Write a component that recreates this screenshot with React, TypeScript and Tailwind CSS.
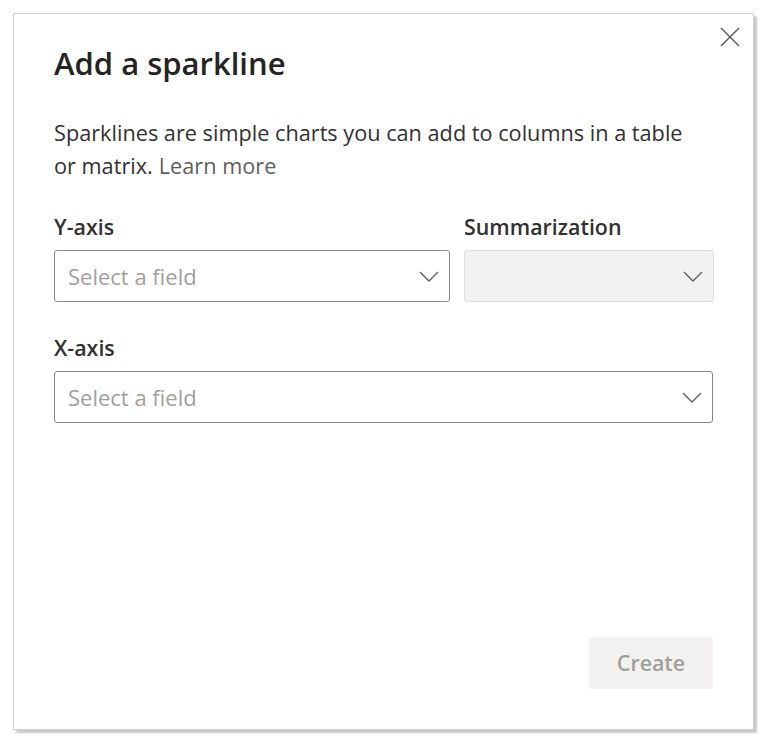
const font = { fontFamily: '"Open Sans", "Noto Sans", sans-serif' };

const Chevron = () => (
  <svg width="20" height="11" viewBox="0 0 20 11" fill="none" className="text-[#605e5c]">
    <polyline points="1,1 10,10 19,1" stroke="currentColor" strokeWidth="1.4" />
  </svg>
);

const SelectBox = ({ placeholder, disabled }: { placeholder?: string; disabled?: boolean }) => (
  <div
    className={`flex h-[52px] items-center justify-between rounded-[3px] border pl-[13px] pr-[10px] ${
      disabled ? "border-[#e1dfdd] bg-[#f3f2f1]" : "border-[#8a8886] bg-white"
    }`}
  >
    <span className="text-[22px] text-[#a19f9d]">{placeholder}</span>
    <Chevron />
  </div>
);

export default function App() {
  return (
    <div className="h-[750px] w-[768px] bg-white" style={font}>
      <div className="relative ml-[13px] mt-[13px] flex h-[717px] w-[741px] flex-col border border-[#d2d0ce] bg-white px-[40px] pb-[40px] shadow-[3px_3px_2px_rgba(0,0,0,0.22)]">
        <button className="absolute right-[13px] top-[13px] text-[#605e5c]">
          <svg width="20" height="20" viewBox="0 0 20 20" fill="none">
            <path d="M1 1 L19 19 M19 1 L1 19" stroke="currentColor" strokeWidth="1.5" />
          </svg>
        </button>

        <h1 className="mt-[29px] text-[31px] font-semibold leading-[40px] text-[#252423]">Add a sparkline</h1>

        <div className="mt-[33px] text-[21.7px] leading-[33px] text-[#323130]">
          <div>Sparklines are simple charts you can add to columns in a table</div>
          <div className="flex gap-[6px]">
            <span>or matrix.</span>
            <span className="text-[#605e5c]">Learn more</span>
          </div>
        </div>

        <div className="mt-[31px] grid grid-cols-[396px_250px] gap-x-[14px]">
          <div>
            <div className="mb-[9px] text-[21.4px] font-semibold leading-[28px] text-[#323130]">Y-axis</div>
            <SelectBox placeholder="Select a field" />
          </div>
          <div>
            <div className="mb-[9px] text-[21.4px] font-semibold leading-[28px] text-[#323130]">Summarization</div>
            <SelectBox disabled />
          </div>
        </div>

        <div className="mt-[32px]">
          <div className="mb-[9px] text-[21.4px] font-semibold leading-[28px] text-[#323130]">X-axis</div>
          <SelectBox placeholder="Select a field" />
        </div>

        <div className="flex-1" />

        <div className="flex justify-end">
          <button className="h-[52px] w-[124px] rounded-[3px] bg-[#f3f2f1] text-[21.4px] font-semibold text-[#a19f9d]">
            Create
          </button>
        </div>
      </div>
    </div>
  );
}
